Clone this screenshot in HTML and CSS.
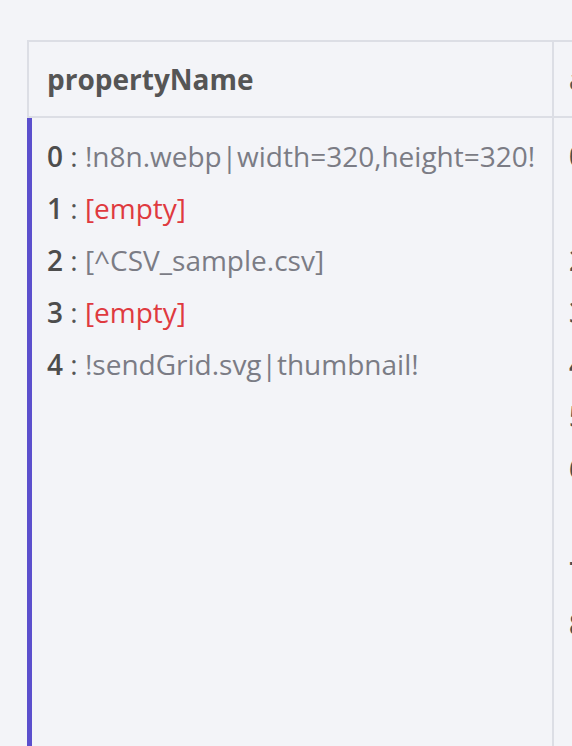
FILE: index.html
```html
<!DOCTYPE html>
<html>
<head>
<meta charset="utf-8">
<link rel="stylesheet" href="styles.css">
</head>
<body>
<div class="table">
  <div class="row head">
    <div class="cell first">propertyName</div>
    <div class="cell second">attachments</div>
  </div>
  <div class="row body">
    <div class="cell first">
      <ul class="list">
        <li><span class="k">0</span> : <span class="v">!n8n.webp|width=320,height=320!</span></li>
        <li><span class="k">1</span> : <span class="e">[empty]</span></li>
        <li><span class="k">2</span> : <span class="v">[^CSV_sample.csv]</span></li>
        <li><span class="k">3</span> : <span class="e">[empty]</span></li>
        <li><span class="k">4</span> : <span class="v">!sendGrid.svg|thumbnail!</span></li>
      </ul>
    </div>
    <div class="cell second">
      <ul class="list">
        <li><span class="k">0</span> : <span class="v">value</span></li>
        <li>&nbsp;</li>
        <li><span class="k">2</span> : <span class="v">value</span></li>
        <li><span class="k">3</span> : <span class="v">value</span></li>
        <li><span class="k">4</span> : <span class="v">value</span></li>
        <li><span class="k">5</span> : <span class="v">value</span></li>
        <li><span class="k">6</span> : <span class="v">value</span></li>
        <li>&nbsp;</li>
        <li><span class="k">7</span> : <span class="v">value</span></li>
        <li><span class="k">8</span> : <span class="v">value</span></li>
      </ul>
    </div>
  </div>
</div>
</body>
</html>
```
FILE: styles.css
```css
html, body {
  margin: 0;
  padding: 0;
  background: #f3f4f8;
  overflow: hidden;
  height: 746px;
}
body {
  font-family: "Open Sans", "DejaVu Sans", sans-serif;
  font-size: 28px;
  color: #555555;
}
.table {
  margin: 40px 0 0 27px;
  width: 800px;
  border-top: 2px solid #dcdee5;
}
.row {
  display: flex;
}
.cell {
  box-sizing: border-box;
  border-right: 2px solid #dcdee5;
}
.cell.first {
  width: 527px;
  flex: none;
}
.cell.second {
  flex: 1;
}
.head .cell {
  height: 76px;
  border-bottom: 2px solid #dcdee5;
  font-weight: 700;
  display: flex;
  align-items: center;
  padding-left: 18px;
}
.head .cell.first {
  border-left: 2px solid #dcdee5;
}
.head .cell.second {
  padding-left: 15px;
}
.body .cell {
  height: 640px;
  padding: 12px 0 0 18px;
}
.body .cell.first {
  border-left: 5px solid #5b4fcd;
  padding-left: 15px;
}
.body .cell.second {
  padding-left: 15px;
}
.list {
  list-style: none;
  margin: 0;
  padding: 0;
}
.list li {
  line-height: 52px;
  white-space: nowrap;
}
.k {
  font-weight: 600;
  color: #4d4d4d;
}
.v {
  color: #7b7c85;
}
.e {
  color: #df3a3f;
}
```
